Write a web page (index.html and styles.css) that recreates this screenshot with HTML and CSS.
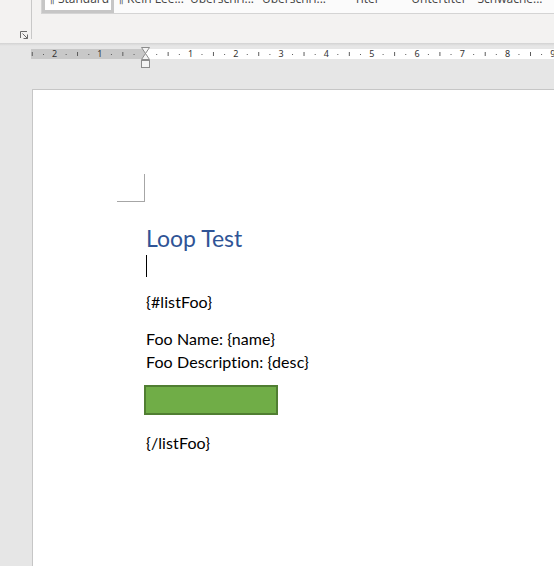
FILE: index.html
```html
<!DOCTYPE html>
<html lang="de">
<head>
<meta charset="utf-8">
<title>Loop Test</title>
<link rel="stylesheet" href="styles.css">
</head>
<body>
<div class="app">
  <div class="ribbon">
    <div class="ribbon-left">
      <svg class="launcher" width="9" height="9" viewBox="0 0 9 9">
        <path d="M0.5 7V0.5H7" fill="none" stroke="#6a6a6a" stroke-width="1"/>
        <path d="M2.5 2.5L7.5 7.5M7.5 3.5V7.5H3.5" fill="none" stroke="#6a6a6a" stroke-width="1"/>
      </svg>
    </div>
    <div class="divider"></div>
    <div class="gallery">
      <div class="style-item selected"><span>¶ Standard</span></div>
      <div class="style-item"><span>¶ Kein Lee...</span></div>
      <div class="style-item"><span>Überschri...</span></div>
      <div class="style-item"><span>Überschri...</span></div>
      <div class="style-item"><span>Titel</span></div>
      <div class="style-item"><span>Untertitel</span></div>
      <div class="style-item"><span>Schwache...</span></div>
    </div>
  </div>
  <div class="workspace">
    <div class="ruler">
      <div class="ruler-nums">
        <span>2</span><span>1</span><span></span><span>1</span><span>2</span><span>3</span><span>4</span><span>5</span><span>6</span><span>7</span><span>8</span><span>9</span>
      </div>
    </div>
    <svg class="indent-marker" width="9" height="22" viewBox="0 0 9 22">
      <polygon points="0.5,0.5 8.5,0.5 4.5,6.5 8.5,12.5 0.5,12.5 4.5,6.5" fill="#f4f4f4" stroke="#8c8c8c" stroke-width="1"/>
      <rect x="0.5" y="13.5" width="8" height="7" fill="#f4f4f4" stroke="#8c8c8c" stroke-width="1"/>
    </svg>
    <div class="page">
      <div class="corner-mark"></div>
      <h1 class="heading">Loop Test</h1>
      <div class="caret"></div>
      <p class="line gap-a">{#listFoo}</p>
      <p class="line gap-b">Foo Name: {name}</p>
      <p class="line">Foo Description: {desc}</p>
      <div class="green-box"></div>
      <p class="line gap-c">{/listFoo}</p>
    </div>
  </div>
</div>
</body>
</html>
```
FILE: styles.css
```css
html, body {
  margin: 0;
  padding: 0;
}
body {
  width: 554px;
  height: 566px;
  overflow: hidden;
  background: #e6e6e6;
}
.app {
  width: 554px;
  height: 566px;
  overflow: hidden;
  display: flex;
  flex-direction: column;
}
.ribbon {
  height: 43px;
  flex: none;
  background: #f3f2f1;
  display: flex;
  align-items: flex-start;
}
.ribbon-left {
  height: 40px;
  padding-left: 20px;
  width: 11px;
  display: flex;
  align-items: flex-end;
}
.launcher {
  display: block;
}
.divider {
  width: 1px;
  height: 39px;
  background: #c8c8c8;
}
.gallery {
  margin-left: 9px;
  height: 13px;
  flex: 1;
  display: flex;
  overflow: hidden;
  background: #fbfbfb;
  border-bottom: 1px solid #d4d4d4;
  border-left: 1px solid #d4d4d4;
  font-family: "Open Sans", "Noto Sans", sans-serif;
  font-size: 12px;
  color: #444;
}
.style-item {
  width: 72px;
  flex: none;
  box-sizing: border-box;
  height: 13px;
  text-align: center;
  white-space: nowrap;
  overflow: hidden;
}
.style-item span {
  display: block;
  line-height: 16px;
  margin-top: -9px;
}
.style-item.selected {
  border: 3px solid #c6c6c6;
  border-top: 0;
  background: #fff;
}
.workspace {
  flex: 1;
  position: relative;
  background: linear-gradient(to bottom, #d2d2d2 0, #e0e0e0 2px, #e6e6e6 3px);
}
.ruler {
  margin-top: 6px;
  margin-left: 31px;
  height: 10px;
  background-color: #fff;
  background-image:
    linear-gradient(to right, #5a5a5a 1px, transparent 1px),
    linear-gradient(to right, #5a5a5a 1px, transparent 1px),
    linear-gradient(to right, #c8c8c8 114px, #fff 114px);
  background-size: 45.3px 4px, 22.65px 1px, 100% 100%;
  background-repeat: repeat-x, repeat-x, no-repeat;
  background-position: 0.75px 3px, 12px 5px, 0 0;
}
.ruler-nums {
  display: flex;
  padding-left: 1px;
  font-family: "Noto Sans", "Open Sans", sans-serif;
  font-size: 9px;
  line-height: 10px;
  color: #333;
}
.ruler-nums span {
  width: 45.3px;
  flex: none;
  text-align: center;
}
.indent-marker {
  position: absolute;
  left: 141px;
  top: 4px;
}
.page {
  margin-top: 30px;
  margin-left: 32px;
  height: 500px;
  background: #fff;
  border-left: 1px solid #c6c6c6;
  border-top: 1px solid #c6c6c6;
  padding-left: 113px;
  font-family: "Lato", "Open Sans", sans-serif;
  color: #000;
  overflow: hidden;
}
.corner-mark {
  margin-top: 84px;
  margin-left: -29px;
  width: 27px;
  height: 27px;
  border-right: 1px solid #a6a6a6;
  border-bottom: 1px solid #a6a6a6;
}
.heading {
  margin: 21px 0 0 0;
  font-family: "Lato", "Open Sans", sans-serif;
  font-weight: 400;
  font-size: 23px;
  line-height: 30px;
  color: #2f5496;
}
.caret {
  margin-top: 2px;
  width: 1px;
  height: 22px;
  background: #000;
}
.line {
  margin: 0;
  font-size: 16px;
  letter-spacing: 0.1px;
  line-height: 23px;
  white-space: nowrap;
}
.gap-a { margin-top: 13px; }
.gap-b { margin-top: 14px; }
.gap-c { margin-top: 16px; }
.green-box {
  margin-top: 12px;
  margin-left: -2px;
  width: 134px;
  height: 30px;
  box-sizing: border-box;
  background: #70ad47;
  border: 2px solid #507e32;
}
```
